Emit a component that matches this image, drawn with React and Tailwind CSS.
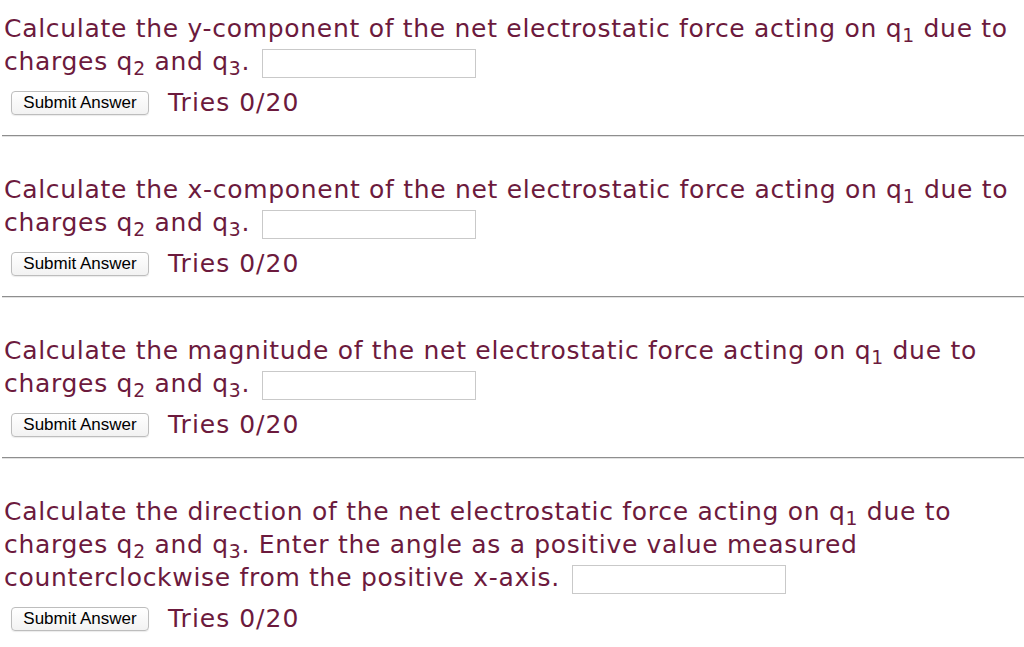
const questions = [
  {
    lines: [
      <>Calculate the y-component of the net electrostatic force acting on q<sub>1</sub> due to</>,
      <>charges q<sub>2</sub> and q<sub>3</sub>.</>,
    ],
  },
  {
    lines: [
      <>Calculate the x-component of the net electrostatic force acting on q<sub>1</sub> due to</>,
      <>charges q<sub>2</sub> and q<sub>3</sub>.</>,
    ],
  },
  {
    lines: [
      <>Calculate the magnitude of the net electrostatic force acting on q<sub>1</sub> due to</>,
      <>charges q<sub>2</sub> and q<sub>3</sub>.</>,
    ],
  },
  {
    lines: [
      <>Calculate the direction of the net electrostatic force acting on q<sub>1</sub> due to</>,
      <>charges q<sub>2</sub> and q<sub>3</sub>. Enter the angle as a positive value measured</>,
      <>counterclockwise from the positive x-axis.</>,
    ],
  },
];

function Question({ lines, last }) {
  return (
    <div>
      <div className="px-[4px] text-[25px] leading-[33px] tracking-[0.7px] text-[#6c1a3d]">
        {lines.map((line, i) => (
          <div key={i} className="whitespace-nowrap">
            {line}
            {i === lines.length - 1 && (
              <input
                type="text"
                className="ml-[12px] h-[29px] w-[214px] border border-[#c9c9c9] bg-white align-middle outline-none"
              />
            )}
          </div>
        ))}
      </div>
      <div className="mt-[8px] flex h-[33px] items-center">
        <button className="ml-[11px] h-[24px] w-[138px] rounded-[4px] border border-[#bdbdbd] bg-gradient-to-b from-white to-[#f2f2f2] font-['Liberation_Sans',Arial,sans-serif] text-[17px] leading-none text-black shadow-[0_1px_1px_rgba(0,0,0,0.08)]">
          Submit Answer
        </button>
        <span className="ml-[19px] text-[25px] leading-[33px] tracking-[1px] text-[#6c1a3d]">
          Tries 0/20
        </span>
      </div>
      {!last && (
        <div className="mb-[36px] ml-[2px] mt-[16px] border-b border-t border-b-[#e2e2e2] border-t-[#8e8e8e]" />
      )}
    </div>
  );
}

export default function App() {
  return (
    <div className="min-h-[647px] bg-white pt-[12px] font-['DejaVu_Sans',Verdana,sans-serif]">
      {questions.map((q, i) => (
        <Question key={i} lines={q.lines} last={i === questions.length - 1} />
      ))}
    </div>
  );
}
